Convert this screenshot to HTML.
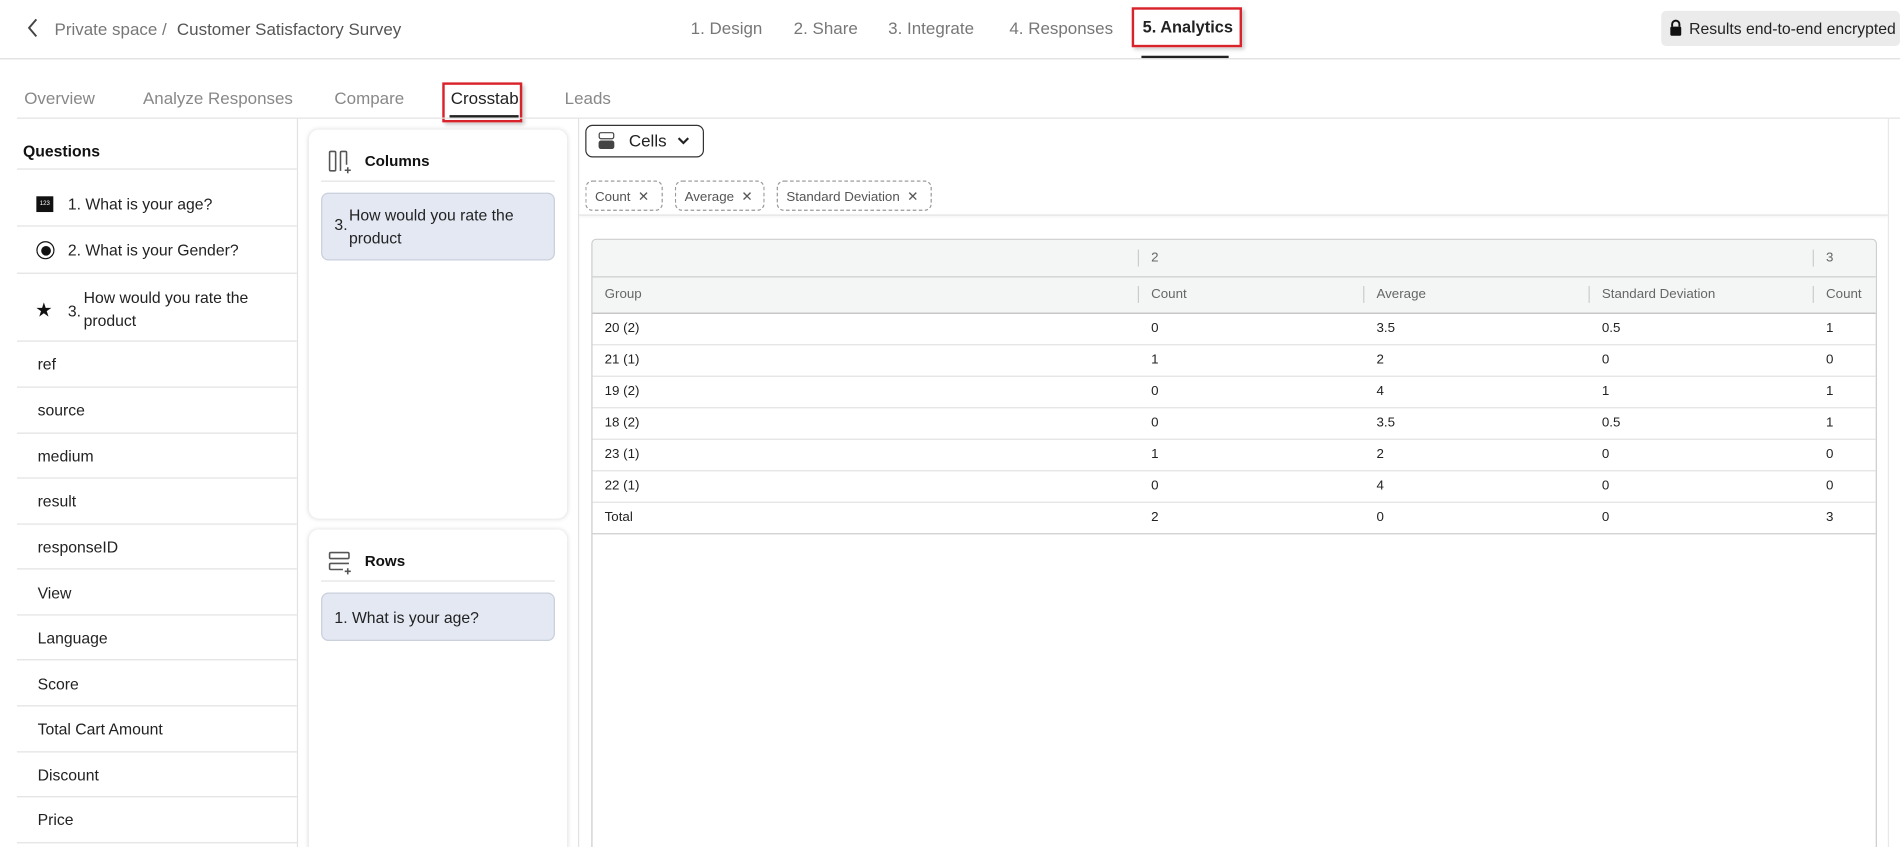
<!DOCTYPE html>
<html><head><meta charset="utf-8"><style>
*{box-sizing:border-box;margin:0;padding:0}
html,body{width:1900px;height:847px;overflow:hidden;background:#fff}
#w{position:absolute;left:0;top:0;width:1568px;height:699px;overflow:hidden;transform:scale(1.2117);transform-origin:0 0;font-family:"Liberation Sans",sans-serif;color:#222}
.a{position:absolute;white-space:nowrap}
.hl{position:absolute;height:1px;background:#e2e2e2}
.nav{top:15px;font-size:14px;color:#777}
.sub{top:73px;font-size:14px;color:#888}
.q{left:31px;font-size:13px;color:#222}
.card{position:absolute;left:255px;width:213px;background:#fff;border-radius:8px;box-shadow:0 0 4px rgba(0,0,0,.15)}
.item{position:absolute;left:10px;width:193px;background:#e3e8f3;border:1px solid #c9cfdb;border-radius:6px;font-size:13px;color:#222}
.chip{position:absolute;top:149px;height:25px;border:1px dashed #999;border-radius:6px;font-size:11px;color:#555;padding:6px 7px;white-space:nowrap}
.th{font-size:11px;color:#666}
.td{font-size:11px;color:#222}
.sep{position:absolute;width:1px;height:14px;background:#ccc}
</style></head><body><div id="w">
<svg class="a" style="left:21px;top:15px" width="12" height="16" viewBox="0 0 12 16"><path d="M9 1L3 8l6 7" fill="none" stroke="#444" stroke-width="1.6"/></svg>
<div class="a" style="left:45px;top:16px;font-size:14px;color:#777">Private space /</div>
<div class="a" style="left:146px;top:16px;font-size:14px;color:#555">Customer Satisfactory Survey</div>
<div class="a nav" style="left:570px">1. Design</div>
<div class="a nav" style="left:655px">2. Share</div>
<div class="a nav" style="left:733px">3. Integrate</div>
<div class="a nav" style="left:833px">4. Responses</div>
<div class="a nav" style="left:943px;color:#222;font-weight:bold;font-size:13.5px">5. Analytics</div>
<div class="a" style="left:934px;top:6px;width:91px;height:33px;border:2px solid #d9232a;box-shadow:2px 2px 3px rgba(0,0,0,.2)"></div>
<div class="a" style="left:942px;top:46px;width:72px;height:2px;background:#222"></div>
<div class="a" style="left:1371px;top:9px;width:197px;height:29px;background:#ebebeb;border-radius:4px"></div>
<svg class="a" style="left:1377px;top:16px" width="12" height="14" viewBox="0 0 12 14"><path d="M3 6V4a3 3 0 0 1 6 0v2" fill="none" stroke="#111" stroke-width="1.6"/><rect x="1.5" y="6" width="9" height="7.5" rx="1" fill="#111"/></svg>
<div class="a" style="left:1394px;top:16px;font-size:13px;color:#222">Results end-to-end encrypted</div>
<div class="hl" style="left:0;top:48px;width:1568px;background:#ddd"></div>
<div class="a sub" style="left:20px">Overview</div>
<div class="a sub" style="left:118px">Analyze Responses</div>
<div class="a sub" style="left:276px">Compare</div>
<div class="a sub" style="left:372px;color:#222">Crosstab</div>
<div class="a sub" style="left:466px">Leads</div>
<div class="a" style="left:371px;top:95px;width:57px;height:2px;background:#222"></div>
<div class="a" style="left:365px;top:68px;width:66px;height:33px;border:2px solid #d9232a;box-shadow:2px 2px 3px rgba(0,0,0,.2)"></div>
<div class="hl" style="left:14px;top:97px;width:1554px"></div>
<div class="a" style="left:245px;top:98px;width:1px;height:601px;background:#e2e2e2"></div>
<div class="a" style="left:19px;top:117px;font-size:13px;font-weight:bold;color:#111">Questions</div>
<div class="hl" style="left:14px;top:139px;width:231px"></div>
<div class="a" style="left:30px;top:162px;width:14px;height:13px;background:#111;color:#fff;font-size:5px;line-height:13px;text-align:center">123</div>
<div class="a q" style="left:56px;top:161px">1. What is your age?</div>
<div class="hl" style="left:14px;top:186px;width:231px"></div>
<div class="a" style="left:30px;top:199px;width:15px;height:15px;border:1.6px solid #111;border-radius:50%"></div>
<div class="a" style="left:33.5px;top:202.5px;width:8px;height:8px;background:#111;border-radius:50%"></div>
<div class="a q" style="left:56px;top:199px">2. What is your Gender?</div>
<div class="hl" style="left:14px;top:225px;width:231px"></div>
<div class="a" style="left:29px;top:246px;font-size:16px;color:#111">★</div>
<div class="a q" style="left:56px;top:249px">3.</div>
<div class="a q" style="left:69px;top:236px;line-height:19px">How would you rate the<br>product</div>
<div class="hl" style="left:14px;top:281px;width:231px"></div>
<div class="a q" style="top:293px">ref</div>
<div class="hl" style="left:14px;top:319px;width:231px"></div>
<div class="a q" style="top:331px">source</div>
<div class="hl" style="left:14px;top:357px;width:231px"></div>
<div class="a q" style="top:369px">medium</div>
<div class="hl" style="left:14px;top:394px;width:231px"></div>
<div class="a q" style="top:406px">result</div>
<div class="hl" style="left:14px;top:432px;width:231px"></div>
<div class="a q" style="top:444px">responseID</div>
<div class="hl" style="left:14px;top:469px;width:231px"></div>
<div class="a q" style="top:482px">View</div>
<div class="hl" style="left:14px;top:507px;width:231px"></div>
<div class="a q" style="top:519px">Language</div>
<div class="hl" style="left:14px;top:544px;width:231px"></div>
<div class="a q" style="top:557px">Score</div>
<div class="hl" style="left:14px;top:582px;width:231px"></div>
<div class="a q" style="top:594px">Total Cart Amount</div>
<div class="hl" style="left:14px;top:620px;width:231px"></div>
<div class="a q" style="top:632px">Discount</div>
<div class="hl" style="left:14px;top:657px;width:231px"></div>
<div class="a q" style="top:669px">Price</div>
<div class="hl" style="left:14px;top:695px;width:231px"></div>
<div class="card" style="top:107px;height:321px">
<svg class="a" style="left:16px;top:17px" width="20" height="20" viewBox="0 0 20 20"><rect x="1" y="1" width="5" height="16" rx="1" fill="none" stroke="#555" stroke-width="1.3"/><path d="M10 17V2a1 1 0 0 1 1-1h3a1 1 0 0 1 1 1v10" fill="none" stroke="#555" stroke-width="1.3"/><path d="M16 14v5M13.5 16.5h5" stroke="#555" stroke-width="1.3"/></svg>
<div class="a" style="left:46px;top:19px;font-size:12.5px;font-weight:bold;color:#111">Columns</div>
<div class="hl" style="left:10px;top:42px;width:193px"></div>
<div class="item" style="top:52px;height:56px"><div class="a" style="left:10px;top:18px">3.</div><div class="a" style="left:22px;top:8px;line-height:19px">How would you rate the<br>product</div></div>
</div>
<div class="card" style="top:437px;height:300px">
<svg class="a" style="left:16px;top:18px" width="20" height="20" viewBox="0 0 20 20"><rect x="1" y="1" width="16" height="5" rx="1" fill="none" stroke="#555" stroke-width="1.3"/><path d="M17 10H2a1 1 0 0 0-1 1v3a1 1 0 0 0 1 1h10" fill="none" stroke="#555" stroke-width="1.3"/><path d="M16 14v5M13.5 16.5h5" stroke="#555" stroke-width="1.3"/></svg>
<div class="a" style="left:46px;top:19px;font-size:12.5px;font-weight:bold;color:#111">Rows</div>
<div class="hl" style="left:10px;top:42px;width:193px"></div>
<div class="item" style="top:52px;height:40px"><div class="a" style="left:10px;top:12px">1. What is your age?</div></div>
</div>
<div class="a" style="left:477px;top:98px;width:1px;height:601px;background:#e2e2e2"></div>
<div class="a" style="left:1558px;top:98px;width:1px;height:601px;background:#e8e8e8"></div>
<div class="a" style="left:483px;top:103px;width:98px;height:27px;border:1px solid #333;border-radius:6px"></div>
<div class="a" style="left:494px;top:109px;width:13px;height:6px;border:1.3px solid #444;border-radius:2px"></div>
<div class="a" style="left:494px;top:116px;width:13px;height:7px;background:#444;border-radius:2px"></div>
<div class="a" style="left:519px;top:108px;font-size:14px;color:#222">Cells</div>
<svg class="a" style="left:558px;top:112px" width="12" height="9" viewBox="0 0 12 9"><path d="M2 2l4 4 4-4" fill="none" stroke="#222" stroke-width="1.8"/></svg>
<div class="chip" style="left:483px;width:64px">Count &nbsp;✕</div>
<div class="chip" style="left:557px;width:74px">Average &nbsp;✕</div>
<div class="chip" style="left:641px;width:128px">Standard Deviation &nbsp;✕</div>
<div class="a" style="left:478px;top:177px;width:1080px;height:1px;background:#e2e2e2;box-shadow:0 1px 2px rgba(0,0,0,.08)"></div>
<div class="a" style="left:488px;top:197px;width:1061px;height:540px;border:1px solid #ccc;border-radius:4px;overflow:hidden">
<div class="a" style="left:0;top:0;width:1061px;height:61px;background:#f4f5f5"></div>
<div class="hl" style="left:0;top:30px;width:1061px;background:#ccc"></div>
<div class="hl" style="left:0;top:60px;width:1061px;background:#bbb"></div>
</div>
<div class="sep" style="left:939px;top:206px"></div><div class="a th" style="left:950px;top:207px">2</div>
<div class="sep" style="left:1496px;top:206px"></div><div class="a th" style="left:1507px;top:207px">3</div>
<div class="a th" style="left:499px;top:237px">Group</div>
<div class="sep" style="left:939px;top:236px"></div><div class="a th" style="left:950px;top:237px">Count</div>
<div class="sep" style="left:1125px;top:236px"></div><div class="a th" style="left:1136px;top:237px">Average</div>
<div class="sep" style="left:1311px;top:236px"></div><div class="a th" style="left:1322px;top:237px">Standard Deviation</div>
<div class="sep" style="left:1496px;top:236px"></div><div class="a th" style="left:1507px;top:237px">Count</div>
<div class="a td" style="left:499px;top:258px;line-height:26px">20 (2)<br>21 (1)<br>19 (2)<br>18 (2)<br>23 (1)<br>22 (1)<br>Total</div>
<div class="a td" style="left:950px;top:258px;line-height:26px">0<br>1<br>0<br>0<br>1<br>0<br>2</div>
<div class="a td" style="left:1136px;top:258px;line-height:26px">3.5<br>2<br>4<br>3.5<br>2<br>4<br>0</div>
<div class="a td" style="left:1322px;top:258px;line-height:26px">0.5<br>0<br>1<br>0.5<br>0<br>0<br>0</div>
<div class="a td" style="left:1507px;top:258px;line-height:26px">1<br>0<br>1<br>1<br>0<br>0<br>3</div>
<div class="hl" style="left:489px;top:284px;width:1059px"></div>
<div class="hl" style="left:489px;top:310px;width:1059px"></div>
<div class="hl" style="left:489px;top:336px;width:1059px"></div>
<div class="hl" style="left:489px;top:362px;width:1059px"></div>
<div class="hl" style="left:489px;top:388px;width:1059px"></div>
<div class="hl" style="left:489px;top:414px;width:1059px"></div>
<div class="hl" style="left:489px;top:440px;width:1059px;background:#ccc"></div>
</div></body></html>
